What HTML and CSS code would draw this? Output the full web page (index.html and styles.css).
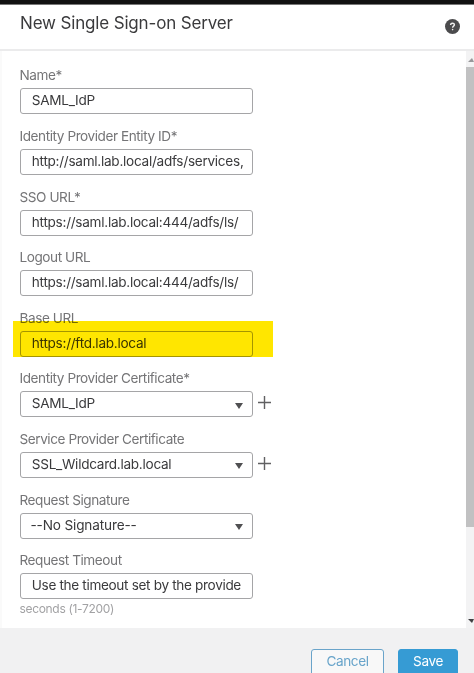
FILE: index.html
```html
<!DOCTYPE html>
<html lang="en">
<head>
  <meta charset="UTF-8">
  <meta name="viewport" content="width=device-width, initial-scale=1.0">
  <title>New Single Sign-on Server</title>
  <link rel="stylesheet" href="styles.css">
</head>
<body>
  <div class="dialog">
    <header class="dialog-header">
      <h1>New Single Sign-on Server</h1>
      <svg class="help" viewBox="0 0 15 15">
        <circle cx="7.5" cy="7.5" r="7.5" fill="#4b4b4d"/>
        <path d="M5.6 6 C5.6 3.7 9.4 3.7 9.4 5.8 C9.4 7.2 7.6 7.1 7.6 8.8" fill="none" stroke="#eee" stroke-width="1.4"/>
        <circle cx="7.6" cy="10.6" r=".8" fill="#eee"/>
      </svg>
    </header>

    <div class="dialog-body">
      <form class="fields">
        <div class="field">
          <label>Name*</label>
          <div class="row"><div class="control"><span>SAML_IdP</span></div></div>
        </div>
        <div class="field">
          <label>Identity Provider Entity ID*</label>
          <div class="row"><div class="control"><span>http://saml.lab.local/adfs/services,</span></div></div>
        </div>
        <div class="field">
          <label>SSO URL*</label>
          <div class="row"><div class="control"><span>https://saml.lab.local:444/adfs/ls/</span></div></div>
        </div>
        <div class="field">
          <label>Logout URL</label>
          <div class="row"><div class="control"><span>https://saml.lab.local:444/adfs/ls/</span></div></div>
        </div>
        <div class="field highlighted">
          <label>Base URL</label>
          <div class="row"><div class="control"><span>https://ftd.lab.local</span></div></div>
        </div>
        <div class="field">
          <label>Identity Provider Certificate*</label>
          <div class="row">
            <div class="control select"><span>SAML_IdP</span><i class="caret"></i></div>
            <svg class="plus" viewBox="0 0 13 13"><path d="M6.5 0v13M0 6.5h13"/></svg>
          </div>
        </div>
        <div class="field">
          <label>Service Provider Certificate</label>
          <div class="row">
            <div class="control select"><span>SSL_Wildcard.lab.local</span><i class="caret"></i></div>
            <svg class="plus" viewBox="0 0 13 13"><path d="M6.5 0v13M0 6.5h13"/></svg>
          </div>
        </div>
        <div class="field">
          <label>Request Signature</label>
          <div class="row"><div class="control select signature"><span>--No Signature--</span><i class="caret"></i></div></div>
        </div>
        <div class="field">
          <label>Request Timeout</label>
          <div class="row"><div class="control timeout"><span>Use the timeout set by the provide</span></div></div>
          <small>seconds (1-7200)</small>
        </div>
      </form>
      <div class="scrollbar">
        <i class="arrow up"></i>
        <div class="thumb"></div>
        <i class="arrow down"></i>
      </div>
    </div>

    <footer class="dialog-footer">
      <button class="btn">Cancel</button>
      <button class="btn primary">Save</button>
    </footer>
  </div>
</body>
</html>
```
FILE: styles.css
```css
* { box-sizing: border-box; margin: 0; padding: 0; }

body {
  height: 673px;
  overflow: hidden;
  background: #fff;
  color: #3a3a3c;
  font-family: Inter, "Liberation Sans", sans-serif;
}

.dialog {
  display: flex;
  flex-direction: column;
  height: 673px;
  overflow: hidden;
  border-top: 4px solid #111;
}

.dialog-header {
  display: flex;
  flex: none;
  justify-content: space-between;
  height: 47px;
  padding: 0 14px 0 20px;
  border-top: 1px solid #777;
  border-bottom: 2px solid #ebebec;
}
.dialog-header h1 {
  padding-top: 7px;
  font-size: 17px;
  font-weight: 400;
  letter-spacing: -.16px;
  line-height: 22px;
  white-space: nowrap;
}
.help {
  width: 15px;
  height: 15px;
  margin-top: 13.5px;
}

.dialog-body {
  display: flex;
  flex: none;
  height: 577px;
  border-left: 2px solid #fafafa;
}
.fields {
  flex: 1;
  padding: 15.4px 0 0 17.5px;
}
.field {
  height: 60.6px;
}
label {
  display: block;
  height: 22px;
  color: #757577;
  font-size: 13.6px;
  letter-spacing: -.44px;
  line-height: 18px;
  white-space: nowrap;
}
.row {
  display: flex;
  align-items: center;
  gap: 5px;
}
.control {
  display: flex;
  width: 233px;
  height: 26px;
  padding: 0 8px 0 11.3px;
  border: 1px solid #a5a5a7;
  border-radius: 3px;
  background: #fff;
  font-size: 13.6px;
  letter-spacing: -.28px;
  line-height: 23px;
}
.control span {
  flex: 1;
  overflow: hidden;
  white-space: nowrap;
}
.select {
  align-items: center;
  padding-right: 9px;
}
.select span {
  height: 24px;
}
.signature {
  padding-left: 10px;
  letter-spacing: -.15px;
}
.timeout {
  letter-spacing: -.34px;
}
.caret {
  margin-top: 3px;
  border: 4px solid transparent;
  border-top: 6px solid #505052;
  border-bottom: 0;
}
.plus {
  width: 13px;
  height: 13px;
  margin-top: -3px;
  fill: none;
  stroke: #606062;
  stroke-width: 1.4;
}
small {
  display: block;
  padding-top: 2px;
  color: #a2a2a4;
  font-size: 12px;
  letter-spacing: -.32px;
  line-height: 16px;
}

/* marker stroke over the base url */
.highlighted {
  position: relative;
}
.highlighted::after {
  content: "";
  position: absolute;
  left: -7px;
  top: 12.2px;
  width: 260.5px;
  height: 36px;
  background: #ffe600;
  mix-blend-mode: multiply;
}

.scrollbar {
  display: flex;
  flex-direction: column;
  align-items: flex-end;
  width: 8px;
  background: #f3f3f4;
}
.thumb {
  width: 8px;
  height: 460px;
  margin-top: 5px;
  background: #c1c1c2;
}
.arrow {
  border: 4px solid transparent;
  border-right-width: 2px;
}
.up {
  margin-top: 7px;
  border-top: 0;
  border-bottom-color: #98989a;
}
.down {
  margin-top: 92px;
  border-bottom: 0;
  border-top-color: #404042;
}

.dialog-footer {
  display: flex;
  flex: 1;
  align-items: flex-start;
  justify-content: flex-end;
  gap: 14px;
  padding: 21px 16px 0 0;
  overflow: hidden;
  background: #f1f1f2;
}
.btn {
  flex: none;
  width: 73px;
  height: 28px;
  padding-bottom: 4px;
  border: 1px solid #6aa4ca;
  border-radius: 3px;
  background: #f8f8f8;
  color: #68a4ca;
  font: 13.6px/22px Inter, sans-serif;
  letter-spacing: -.4px;
}
.primary {
  width: 60px;
  border-color: #369bd4;
  background: #369bd4;
  color: #fff;
}
```
